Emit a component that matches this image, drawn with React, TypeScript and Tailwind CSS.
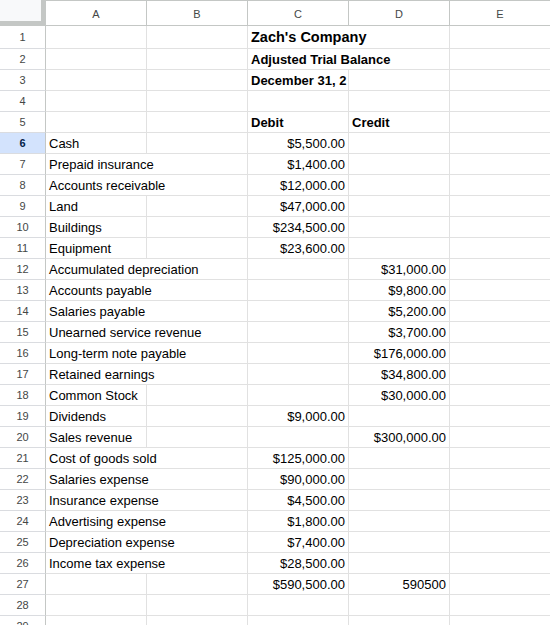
import React from "react";

type Cell = {
  text?: string;
  span?: number;
  right?: boolean;
  bold?: boolean;
  big?: boolean;
};

type Row = {
  n: number;
  cells: Cell[];
  tall?: boolean;
  selected?: boolean;
};

const empty = (): Cell[] => [{}, {}, {}, {}, {}];

// long labels spill over into column B, so the A/B gridline is gone on those rows
const entry = (
  n: number,
  label: string,
  debit = "",
  credit = "",
  long = false,
): Row => ({
  n,
  selected: n === 6,
  cells: [
    { text: label, span: long ? 2 : 1 },
    ...(long ? [] : [{}]),
    { text: debit, right: true },
    { text: credit, right: true },
    {},
  ],
});

const rows: Row[] = [
  {
    n: 1,
    tall: true,
    cells: [{}, {}, { text: "Zach's Company", span: 2, bold: true, big: true }, {}],
  },
  {
    n: 2,
    cells: [{}, {}, { text: "Adjusted Trial Balance", span: 2, bold: true }, {}],
  },
  { n: 3, cells: [{}, {}, { text: "December 31, 2", bold: true }, {}, {}] },
  { n: 4, cells: empty() },
  {
    n: 5,
    cells: [{}, {}, { text: "Debit", bold: true }, { text: "Credit", bold: true }, {}],
  },
  entry(6, "Cash", "$5,500.00"),
  entry(7, "Prepaid insurance", "$1,400.00", "", true),
  entry(8, "Accounts receivable", "$12,000.00", "", true),
  entry(9, "Land", "$47,000.00"),
  entry(10, "Buildings", "$234,500.00"),
  entry(11, "Equipment", "$23,600.00"),
  entry(12, "Accumulated depreciation", "", "$31,000.00", true),
  entry(13, "Accounts payable", "", "$9,800.00", true),
  entry(14, "Salaries payable", "", "$5,200.00", true),
  entry(15, "Unearned service revenue", "", "$3,700.00", true),
  entry(16, "Long-term note payable", "", "$176,000.00", true),
  entry(17, "Retained earnings", "", "$34,800.00", true),
  entry(18, "Common Stock", "", "$30,000.00"),
  entry(19, "Dividends", "$9,000.00"),
  entry(20, "Sales revenue", "", "$300,000.00"),
  entry(21, "Cost of goods sold", "$125,000.00", "", true),
  entry(22, "Salaries expense", "$90,000.00", "", true),
  entry(23, "Insurance expense", "$4,500.00", "", true),
  entry(24, "Advertising expense", "$1,800.00", "", true),
  entry(25, "Depreciation expense", "$7,400.00", "", true),
  entry(26, "Income tax expense", "$28,500.00", "", true),
  {
    n: 27,
    cells: [{}, {}, { text: "$590,500.00", right: true }, { text: "590500", right: true }, {}],
  },
  { n: 28, cells: empty() },
  { n: 29, cells: empty() },
];

const columns = ["A", "B", "C", "D", "E"];

export default function App() {
  return (
    <div
      className="w-[550px] h-[625px] overflow-hidden bg-white text-black"
      style={{ fontFamily: '"Liberation Sans", Arial, sans-serif' }}
    >
      <div className="grid grid-cols-[46px_repeat(5,101px)] w-[551px]">
        {/* corner */}
        <div className="h-[26px] bg-[#f8f9fa] border-r border-b border-[#c4c7c5] relative">
          <div className="absolute right-0 top-0 bottom-0 w-[4px] bg-[#c4c7c5]" />
          <div className="absolute left-0 right-0 bottom-0 h-[4px] bg-[#c4c7c5]" />
        </div>
        {columns.map((c) => (
          <div
            key={c}
            className="h-[26px] pt-[2px] border-t border-r border-b border-t-[#c4c7c5] border-r-[#c4c7c5] border-b-[#c4c7c5] flex items-center justify-center text-[11px] text-[#444746]"
          >
            {c}
          </div>
        ))}

        {rows.map((row) => (
          <React.Fragment key={row.n}>
            <div
              className={`${row.tall ? "h-[23px]" : "h-[21px]"} border-r border-b border-r-[#c4c7c5] border-b-[#dadce0] flex items-center justify-center text-[11px] ${
                row.selected
                  ? "bg-[#d3e3fd] font-bold text-[#041e49]"
                  : "bg-white text-[#444746]"
              }`}
            >
              {row.n}
            </div>
            {row.cells.map((cell, i) => (
              <div
                key={i}
                className={`${cell.span === 2 ? "col-span-2" : ""} ${
                  row.tall ? "h-[23px]" : "h-[21px]"
                } border-r border-b border-[#e1e1e1] px-[3px] pt-[2px] flex items-center overflow-hidden whitespace-nowrap ${
                  cell.right ? "justify-end" : "justify-start"
                } ${cell.bold ? "font-bold" : ""} ${
                  cell.big ? "text-[14.5px]" : "text-[13px]"
                }`}
              >
                {cell.text}
              </div>
            ))}
          </React.Fragment>
        ))}
      </div>
    </div>
  );
}
